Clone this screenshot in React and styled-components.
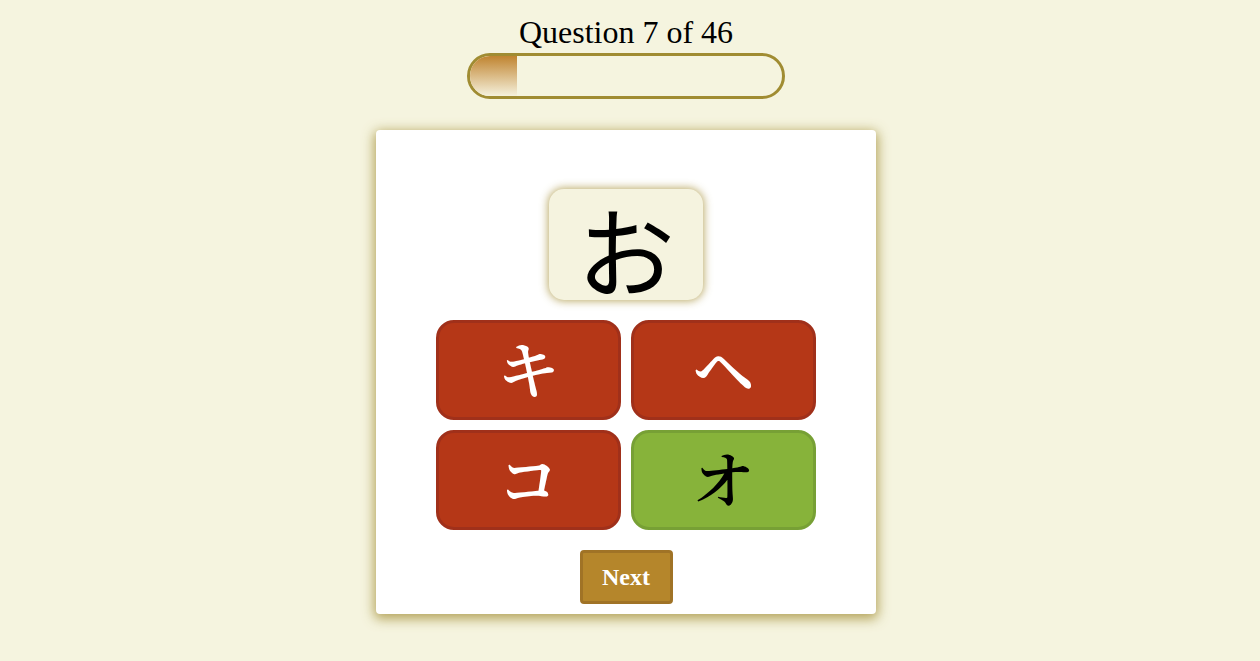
import React from "react";
import styled, { createGlobalStyle } from "styled-components";

const Global = createGlobalStyle`
  html, body { margin: 0; padding: 0; background: #f5f4df; }
  body { font-family: "Liberation Serif", "Noto Sans CJK JP", serif; color: #000; }
`;

const Page = styled.div`
  display: flex;
  flex-direction: column;
  align-items: center;
  padding: 13px 8px 40px 0;
`;

const Title = styled.h1`
  margin: 0;
  font-size: 32px;
  font-weight: normal;
  line-height: 39px;
`;

const Bar = styled.div`
  width: 312px;
  height: 40px;
  border: 3px solid #a08c32;
  border-radius: 23px;
  overflow: hidden;
  margin-top: 1px;
  background: #f5f4df;
`;

const Fill = styled.div`
  height: 100%;
  background: linear-gradient(to bottom, #c08430, #f5f1dc);
`;

const Card = styled.div`
  margin-top: 31px;
  width: 500px;
  height: 484px;
  box-sizing: border-box;
  background: #fff;
  border-radius: 4px;
  box-shadow: 0 3px 12px 2px rgba(165, 145, 60, 0.8);
  display: flex;
  flex-direction: column;
  align-items: center;
  padding-top: 59px;
`;

const KanaBox = styled.div`
  width: 154px;
  height: 111px;
  box-sizing: border-box;
  background: #f5f3df;
  border-radius: 15px;
  box-shadow: 0 0 8px 1px rgba(175, 155, 75, 0.85);
  display: flex;
  align-items: center;
  justify-content: center;
  font-family: "Noto Sans CJK JP", sans-serif;
  font-size: 98px;
  line-height: 1;
  padding-top: 4px;
`;

const Grid = styled.div`
  margin-top: 20px;
  display: grid;
  grid-template-columns: 185px 185px;
  grid-auto-rows: 100px;
  gap: 10px;
`;

const Choice = styled.button`
  box-sizing: border-box;
  border: 3px solid ${(p) => (p.$correct ? "#77a035" : "#a0301a")};
  background: ${(p) => (p.$correct ? "#87b33a" : "#b53717")};
  color: ${(p) => (p.$correct ? "#000" : "#fff")};
  border-radius: 18px;
  font-family: "Noto Serif CJK JP", "Liberation Serif", "Noto Sans CJK JP", serif;
  font-size: 62px;
  font-weight: 600;
  line-height: 1;
  display: flex;
  align-items: center;
  justify-content: center;
  padding: 0 0 4px;
  cursor: pointer;
`;

const Next = styled.button`
  margin-top: 20px;
  width: 93px;
  height: 54px;
  box-sizing: border-box;
  background: #b5862b;
  border: 3px solid #a07326;
  border-radius: 4px;
  color: #fff;
  font-family: "Liberation Serif", serif;
  font-weight: bold;
  font-size: 24px;
  cursor: pointer;
`;

const choices = [
  { k: "キ" },
  { k: "ヘ" },
  { k: "コ" },
  { k: "オ", correct: true },
];

export default function App() {
  const progress = (7 / 46) * 100;
  return (
    <>
      <Global />
      <Page>
        <Title>Question 7 of 46</Title>
        <Bar>
          <Fill style={{ width: `${progress}%` }} />
        </Bar>
        <Card>
          <KanaBox>お</KanaBox>
          <Grid>
            {choices.map((c) => (
              <Choice key={c.k} $correct={c.correct}>
                {c.k}
              </Choice>
            ))}
          </Grid>
          <Next>Next</Next>
        </Card>
      </Page>
    </>
  );
}
